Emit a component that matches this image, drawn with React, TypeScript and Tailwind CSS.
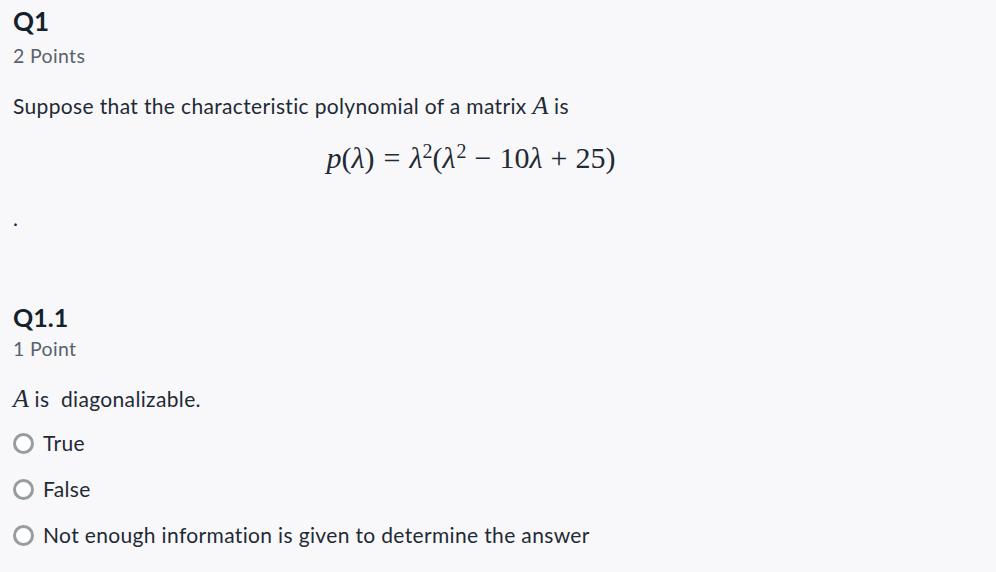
import React from 'react';

function Radio({ label }: { label: string }) {
  return (
    <div className="flex h-[46px] items-center">
      <span className="ml-[13px] mr-[9px] inline-block h-[21px] w-[21px] rounded-full border-[3px] border-[#979d9f] bg-white" />
      <span>{label}</span>
    </div>
  );
}

export default function App() {
  return (
    <div
      className="min-h-[572px] w-full bg-[#f8f8fa] text-[21px] tracking-[0.35px] text-[#1f2a35]"
      style={{ fontFamily: 'Lato, "Open Sans", sans-serif' }}
    >
      <div className="px-[13px] pt-[3px]">
        <h1 className="text-[26px] font-bold leading-[36px] tracking-normal text-[#15212b]">Q1</h1>
        <div className="mt-[4px] text-[19.5px] leading-[26px] text-[#58626b]">2 Points</div>
        <p className="mt-[22px] leading-[30px]">
          Suppose that the characteristic polynomial of a matrix{' '}
          <span className="font-['Liberation_Serif',serif] text-[26px] italic tracking-normal">A</span> is
        </p>
        <div className="mt-[19px] w-[916px] text-center font-['Liberation_Serif',serif] text-[30px] leading-[36px] tracking-normal">
          <span className="italic">p</span>(<span className="italic">λ</span>)<span className="mx-[9px]">=</span><span className="italic">λ</span>
          <sup className="text-[20px]">2</sup>(<span className="italic">λ</span>
          <sup className="ml-[1px] text-[20px]">2</sup><span className="mx-[8px]">−</span>10<span className="italic">λ</span><span className="mx-[8px]">+</span>25)
        </div>
        <div className="mt-[27px] leading-[30px]">.</div>
        <h2 className="mt-[67px] text-[25px] font-bold leading-[34px] tracking-normal text-[#15212b]">Q1.1</h2>
        <div className="mt-[2px] text-[19.5px] leading-[26px] text-[#58626b]">1 Point</div>
        <p className="mt-[22px] leading-[30px]">
          <span className="font-['Liberation_Serif',serif] text-[26px] italic tracking-normal">A</span> is&nbsp; diagonalizable.
        </p>
      </div>
      <div className="mt-[6px]">
        <Radio label="True" />
        <Radio label="False" />
        <Radio label="Not enough information is given to determine the answer" />
      </div>
    </div>
  );
}
